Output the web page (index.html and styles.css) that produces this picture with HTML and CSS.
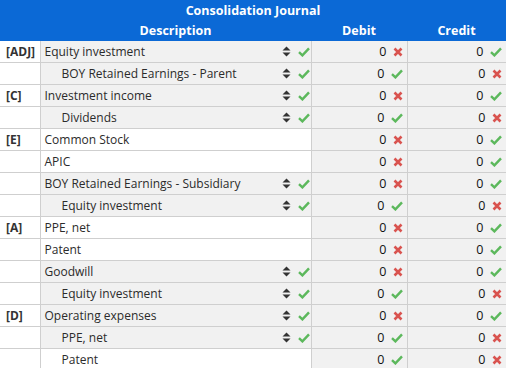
FILE: index.html
```html
<!DOCTYPE html>
<html>
<head>
<meta charset="utf-8">
<link rel="stylesheet" href="styles.css">
</head>
<body>
<table class="journal">
  <colgroup><col class="c-label"><col class="c-desc"><col class="c-debit"><col class="c-credit"></colgroup>
  <thead>
    <tr class="title-row"><th colspan="4">Consolidation Journal</th></tr>
    <tr class="head-row"><th></th><th>Description</th><th>Debit</th><th>Credit</th></tr>
  </thead>
  <tbody id="rows"></tbody>
</table>
<script src="app.js"></script>
</body>
</html>
```

FILE: styles.css
```css
html, body { margin: 0; padding: 0; background: #fff; }
body { font-family: "Open Sans", "Liberation Sans", sans-serif; font-size: 12px; color: #2b2b2b; }
.journal { border-collapse: collapse; width: 506px; table-layout: fixed; }
.c-label { width: 40px; }
.c-desc { width: 271px; }
.c-debit { width: 96px; }
.c-credit { width: 99px; }
thead th { background: #0b69d6; color: #fff; font-weight: 700; font-size: 12.5px; padding: 0; text-align: center; }
.title-row th { height: 20px; line-height: 21px; }
.head-row th { height: 20px; line-height: 20px; }
tbody td { height: 21px; padding: 0; border: 1px solid #cfcfcf; }
tbody tr:first-child td { border-top: none; }
tbody td:first-child { border-left: none; }
.lbl { background: #fff; font-weight: 700; color: #333; padding-left: 6px !important; }
.desc { background: #fff; }
.desc.sel { background: #f1f1f1; }
.dwrap { display: flex; align-items: center; padding-left: 4px; padding-right: 1px; }
.desc.ind .dwrap { padding-left: 21px; }
.dwrap .txt { flex: 1; }
.sort { margin-right: 7px; }
.amt { background: #f1f1f1; }
.awrap { display: flex; justify-content: flex-end; align-items: center; gap: 6px; padding-right: 4px; color: #111; font-size: 12.5px; }
.icon { display: block; }
```

FILE: app.js
```js
const rows = [
  ["[ADJ]", "Equity investment", 1, 0, "x", "c"],
  ["", "BOY Retained Earnings - Parent", 1, 1, "c", "x"],
  ["[C]", "Investment income", 1, 0, "x", "c"],
  ["", "Dividends", 1, 1, "c", "x"],
  ["[E]", "Common Stock", 0, 0, "x", "c"],
  ["", "APIC", 0, 0, "x", "c"],
  ["", "BOY Retained Earnings - Subsidiary", 1, 0, "x", "c"],
  ["", "Equity investment", 1, 1, "c", "x"],
  ["[A]", "PPE, net", 0, 0, "x", "c"],
  ["", "Patent", 0, 0, "x", "c"],
  ["", "Goodwill", 1, 0, "x", "c"],
  ["", "Equity investment", 1, 1, "c", "x"],
  ["[D]", "Operating expenses", 1, 0, "x", "c"],
  ["", "PPE, net", 1, 1, "c", "x"],
  ["", "Patent", 0, 1, "c", "x"]
];
const check = '<svg class="icon" width="12" height="10" viewBox="0 0 12 10"><path d="M1 5.2 L4.4 8.4 L11 1.4" fill="none" stroke="#5cb85c" stroke-width="2.4"/></svg>';
const cross = '<svg class="icon" width="10" height="10" viewBox="0 0 10 10"><path d="M1.5 1.5 L8.5 8.5 M8.5 1.5 L1.5 8.5" fill="none" stroke="#d9534f" stroke-width="2.6"/></svg>';
const sort = '<svg class="icon sort" width="9" height="11" viewBox="0 0 9 11"><path d="M4.5 0.5 L8.5 4.5 L0.5 4.5 Z M0.5 6.5 L8.5 6.5 L4.5 10.5 Z" fill="#333"/></svg>';
const tb = document.getElementById("rows");
for (const [lbl, txt, sel, ind, d, c] of rows) {
  const tr = document.createElement("tr");
  tr.innerHTML =
    '<td class="lbl">' + lbl + '</td>' +
    '<td class="desc' + (sel ? ' sel' : '') + (ind ? ' ind' : '') + '"><div class="dwrap"><span class="txt">' + txt + '</span>' + (sel ? sort + check : '') + '</div></td>' +
    '<td class="amt"><div class="awrap"><span>0</span>' + (d === "c" ? check : cross) + '</div></td>' +
    '<td class="amt"><div class="awrap"><span>0</span>' + (c === "c" ? check : cross) + '</div></td>';
  tb.appendChild(tr);
}
```
